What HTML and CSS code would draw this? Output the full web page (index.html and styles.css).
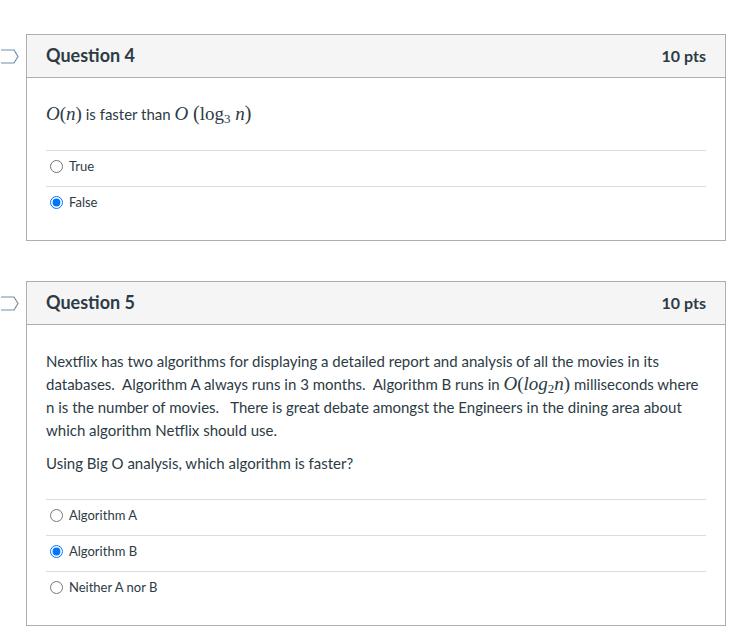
FILE: index.html
```html
<!DOCTYPE html>
<html lang="en">
<head>
    <meta charset="UTF-8">
    <title>Quiz</title>
    <link rel="stylesheet" href="styles.css">
</head>
<body>

<div class="quiz">
    <div class="question">
        <svg class="flag" width="18" height="15" viewBox="0 0 18 15"><path d="M-2 1 H13 L17 7.5 L13 14 H-2" fill="none" stroke="#6f8fae" stroke-width="1.2"/></svg>
        <div class="question-header">
            <span class="question-name">Question 4</span>
            <span class="points">10 pts</span>
        </div>
        <div class="question-body">
            <div class="question-text">
                <p><span class="math"><i>O</i>(<i>n</i>)</span> is faster than <span class="math"><i>O</i> <span class="paren">(</span>log<sub>3</sub> <i>n</i><span class="paren">)</span></span></p>
            </div>
            <div class="answers">
                <label class="answer"><input type="radio" name="q4"> True</label>
                <label class="answer"><input type="radio" name="q4" checked> False</label>
            </div>
        </div>
    </div>

    <div class="question">
        <svg class="flag" width="18" height="15" viewBox="0 0 18 15"><path d="M-2 1 H13 L17 7.5 L13 14 H-2" fill="none" stroke="#6f8fae" stroke-width="1.2"/></svg>
        <div class="question-header">
            <span class="question-name">Question 5</span>
            <span class="points">10 pts</span>
        </div>
        <div class="question-body">
            <div class="question-text">
                <p>Nextflix has two algorithms for displaying a detailed report and analysis of all the movies in its databases.&nbsp; Algorithm A always runs in 3 months.&nbsp; Algorithm B runs in <span class="math"><i>O</i>(<i>log</i><sub>2</sub><i>n</i>)</span> milliseconds where n is the number of movies.&nbsp;&nbsp; There is great debate amongst the Engineers in the dining area about which algorithm Netflix should use.</p>
                <p>Using Big O analysis, which algorithm is faster?</p>
            </div>
            <div class="answers">
                <label class="answer"><input type="radio" name="q5"> Algorithm A</label>
                <label class="answer"><input type="radio" name="q5" checked> Algorithm B</label>
                <label class="answer"><input type="radio" name="q5"> Neither A nor B</label>
            </div>
        </div>
    </div>
</div>

</body>
</html>
```

FILE: styles.css
```css
body { margin: 0; font-family: Lato, "Open Sans", sans-serif; color: #2d3b45; background: #fff; }
.quiz { padding: 34px 17px 0 26px; display: flex; flex-direction: column; gap: 40px; }
.question { position: relative; border: 1px solid #aeaeae; }
.flag { position: absolute; left: -26px; top: 14px; }
.question-header {
    display: flex;
    justify-content: space-between;
    align-items: center;
    height: 40px;
    padding: 0 19px 2px;
    background-color: #f5f5f5;
    border-bottom: 1px solid #aeaeae;
}
.question-name { font-size: 18px; font-weight: bold; }
.points { font-size: 16px; font-weight: bold; }
.question-body { padding: 0 19px 18px; }
.question-text { padding-top: 25px; margin-bottom: 24px; font-size: 15px; line-height: 23px; }
.question-text p { margin: 0 0 10px; }
.question-text p:last-child { margin-bottom: 0; }
.math { font-family: "Liberation Serif", "DejaVu Serif", serif; font-size: 19px; line-height: 0; }
.math sub { font-size: 13px; font-style: normal; vertical-align: -3px; line-height: 0; }
.paren { font-size: 20px; }
.answers { display: flex; flex-direction: column; }
.answer {
    display: flex;
    align-items: center;
    gap: 6px;
    height: 20px;
    padding: 5px 0 10px 4px;
    border-top: 1px solid #dcdcdc;
    font-size: 13px;
}
.answer input { margin: 0; width: 13px; height: 13px; }
```
